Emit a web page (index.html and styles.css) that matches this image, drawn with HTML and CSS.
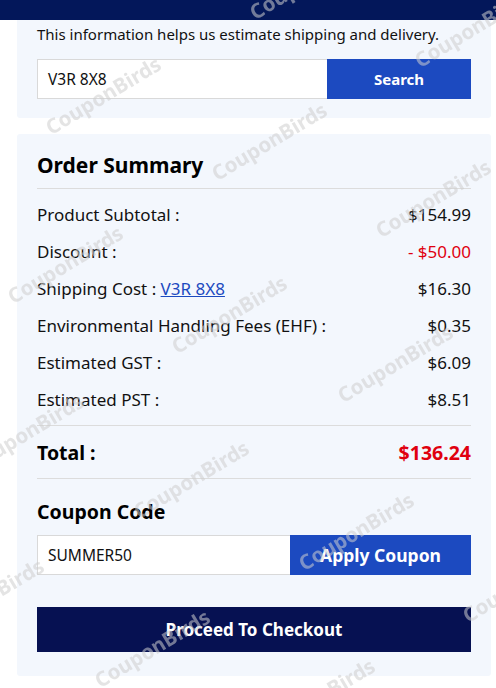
FILE: index.html
```html
<!DOCTYPE html>
<html lang="en">
<head>
<meta charset="utf-8">
<title>Order Summary</title>
<link rel="stylesheet" href="styles.css">
</head>
<body>
<div class="topbar"></div>
<section class="card card-ship">
  <p class="hint">This information helps us estimate shipping and delivery.</p>
  <div class="field">
    <div class="input">V3R 8X8</div>
    <button class="btn btn-search">Search</button>
  </div>
</section>
<section class="card card-summary">
  <h2 class="title">Order Summary</h2>
  <div class="rows">
    <div class="row"><span>Product Subtotal :</span><span>$154.99</span></div>
    <div class="row"><span>Discount :</span><span class="red">- $50.00</span></div>
    <div class="row"><span>Shipping Cost : <a class="link" href="#">V3R 8X8</a></span><span>$16.30</span></div>
    <div class="row"><span>Environmental Handling Fees (EHF) :</span><span>$0.35</span></div>
    <div class="row"><span>Estimated GST :</span><span>$6.09</span></div>
    <div class="row"><span>Estimated PST :</span><span>$8.51</span></div>
  </div>
  <div class="total"><span>Total :</span><span class="red">$136.24</span></div>
  <h3 class="coupon-title">Coupon Code</h3>
  <div class="field">
    <div class="input">SUMMER50</div>
    <button class="btn btn-apply">Apply Coupon</button>
  </div>
  <button class="btn btn-checkout">Proceed To Checkout</button>
</section>
<div class="watermarks" aria-hidden="true">
  <span class="wm" style="left:307px;top:-20px">CouponBirds</span>
  <span class="wm" style="left:472px;top:28px">CouponBirds</span>
  <span class="wm" style="left:103px;top:95px">CouponBirds</span>
  <span class="wm" style="left:269px;top:141px">CouponBirds</span>
  <span class="wm" style="left:433px;top:198px">CouponBirds</span>
  <span class="wm" style="left:65px;top:264px">CouponBirds</span>
  <span class="wm" style="left:229px;top:314px">CouponBirds</span>
  <span class="wm" style="left:395px;top:363px">CouponBirds</span>
  <span class="wm" style="left:26px;top:432px">CouponBirds</span>
  <span class="wm" style="left:191px;top:479px">CouponBirds</span>
  <span class="wm" style="left:356px;top:531px">CouponBirds</span>
  <span class="wm" style="left:-14px;top:597px">CouponBirds</span>
  <span class="wm" style="left:152px;top:648px">CouponBirds</span>
  <span class="wm" style="left:520px;top:583px">CouponBirds</span>
  <span class="wm" style="left:317px;top:697px">CouponBirds</span>
</div>
</body>
</html>
```
FILE: styles.css
```css
* { box-sizing: border-box; }
html, body { margin: 0; padding: 0; }
body {
  background: #ffffff;
  font-family: "Noto Sans", "Open Sans", sans-serif;
  color: #000;
  width: 496px;
  height: 688px;
  overflow: hidden;
}
.topbar {
  height: 20px;
  background: #03175a;
}
.card {
  background: #f3f7fd;
  margin: 0 5px 0 17px;
  padding: 0 20px;
  border-radius: 3px;
}
.card-ship {
  padding-top: 3px;
  padding-bottom: 19px;
  border-radius: 0 0 3px 3px;
}
.hint {
  margin: 0 0 14px;
  font-size: 15px;
  line-height: 22px;
  color: #111;
}
.field {
  display: flex;
  height: 40px;
}
.input {
  flex: 1;
  background: #fff;
  border: 1px solid #d9d9d9;
  border-right: 0;
  padding-left: 10px;
  display: flex;
  align-items: center;
  font-size: 15.5px;
  color: #111;
}
.btn {
  border: 0;
  margin: 0;
  padding: 0;
  font-family: inherit;
  font-weight: 700;
  color: #fff;
  cursor: pointer;
}
.btn-search {
  width: 144px;
  background: #1c4ac0;
  font-size: 15px;
}
.card-summary {
  margin-top: 16px;
  padding-bottom: 24px;
}
.title {
  margin: 0;
  padding: 18px 0 9px;
  line-height: 27px;
  font-size: 21px;
  font-weight: 700;
  border-bottom: 1px solid #dcdcdc;
}
.rows {
  padding: 7px 0;
  border-bottom: 1px solid #dcdcdc;
}
.row {
  display: flex;
  justify-content: space-between;
  align-items: center;
  height: 37px;
  font-size: 17px;
  color: #111;
}
.red { color: #e0000f; }
.link { color: #1c4ac0; text-decoration: underline; }
.total {
  display: flex;
  justify-content: space-between;
  align-items: center;
  height: 53px;
  border-bottom: 1px solid #dcdcdc;
  font-size: 19.5px;
  font-weight: 700;
}
.coupon-title {
  margin: 20px 0 10px;
  line-height: 26px;
  font-size: 19.5px;
  font-weight: 700;
}
.btn-apply {
  width: 181px;
  background: #1c4ac0;
  font-size: 17.5px;
}
.btn-checkout {
  display: block;
  width: 100%;
  height: 45px;
  margin-top: 32px;
  background: #061152;
  font-size: 17px;
}
.watermarks {
  position: fixed;
  inset: 0;
  overflow: hidden;
  pointer-events: none;
}
.wm {
  position: absolute;
  transform: translate(-50%, -50%) rotate(-31deg);
  white-space: nowrap;
  font-size: 20.5px;
  font-weight: 700;
  color: rgba(205, 205, 205, 0.55);
}
```
